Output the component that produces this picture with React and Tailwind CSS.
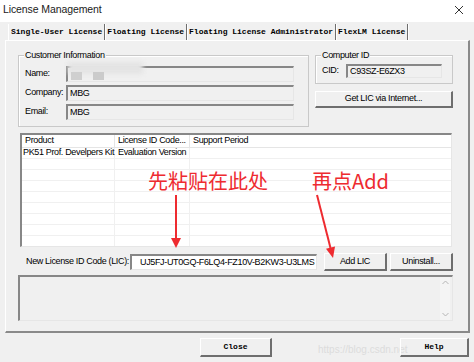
import React from "react";

const ui = "font-['Liberation_Sans',Arial,sans-serif] text-[9px] tracking-[-0.35px] text-black";
const mono = "font-['Liberation_Mono',monospace] text-[8px] tracking-normal font-bold text-black";
const sunken =
  "border-t-2 border-l-2 border-t-[#878787] border-l-[#878787] border-b border-r border-b-[#e6e6e6] border-r-[#e6e6e6]";
const raised =
  "border-t border-l border-t-white border-l-white border-b-2 border-r-2 border-b-[#6e6e6e] border-r-[#6e6e6e]";

const Field = ({ label, value, children }) => (
  <div className="flex items-center h-[16px]">
    <span className="w-[47px] pl-[6px]">{label}</span>
    <div className={`relative w-[228px] h-[16px] flex items-center pl-[2px] bg-[#f0f0f0] ${sunken}`}>
      {value}
      {children}
    </div>
  </div>
);

const Group = ({ title, className, children }) => (
  <div className={`relative border border-[#c9c9c9] shadow-[inset_1px_1px_0_#fff] ${className}`}>
    <span className="absolute -top-[7px] left-[5px] bg-[#f0f0f0] px-[1px] leading-[12px]">{title}</span>
    {children}
  </div>
);

const Tab = ({ children, active }) => (
  <div
    className={`h-[16px] flex items-center px-[2px] border-r border-r-[#6e6e6e] shadow-[1px_0_0_#fff] ${
      active ? "border-l border-l-white" : ""
    }`}
  >
    {children}
  </div>
);

export default function App() {
  const rows = Array.from({ length: 9 });
  return (
    <div className={`relative w-[474px] h-[362px] bg-[#f0f0f0] overflow-hidden ${ui}`}>
      {/* title bar */}
      <div className="h-[22px] bg-white flex items-center justify-between pl-[3px] pr-[10px]">
        <span className="text-[10.5px] tracking-[-0.1px] text-[#1a1a1a] -mt-[2px]">License Management</span>
        <svg width="10" height="10" viewBox="0 0 10 10" className="-mt-[2px]">
          <path d="M1 1L9 9M9 1L1 9" stroke="#333" strokeWidth="1" />
        </svg>
      </div>

      {/* tabs */}
      <div className={`flex pl-[8px] pt-[2px] h-[18px] ${mono}`}>
        <Tab active>Single-User License</Tab>
        <Tab>Floating License</Tab>
        <Tab>Floating License Administrator</Tab>
        <Tab>FlexLM License</Tab>
      </div>

      {/* tab panel */}
      <div className="ml-[5px] w-[465px] h-[293px] border-t border-l border-t-white border-l-white border-r-2 border-b-2 border-r-[#8a8a8a] border-b-[#8a8a8a] pl-[12px] pt-[14px]">
        <div className="flex gap-[6px]">
          <Group title="Customer Information" className="w-[291px] h-[72px] pt-[10px]">
            <div className="flex flex-col gap-[3px]">
              <Field label="Name:" value="">
                <div className="absolute left-[0px] -top-[6px] w-[75px] h-[12px] bg-[#e4e4e4] blur-[2px]" />
                <div className="absolute left-[3px] top-[4px] w-[11px] h-[8px] bg-[#cfcfcf] blur-[0.5px]" />
                <div className="absolute left-[25px] top-[4px] w-[11px] h-[8px] bg-[#cbcbcb] blur-[0.5px]" />
              </Field>
              <Field label="Company:" value="MBG" />
              <Field label="Email:" value="MBG" />
            </div>
          </Group>
          <div className="w-[138px] flex flex-col">
            <Group title="Computer ID" className="h-[29px] pt-[8px]">
              <div className="flex items-center">
                <span className="w-[30px] pl-[6px]">CID:</span>
                <div className={`w-[96px] h-[14px] flex items-center pl-[2px] ${sunken}`}>C93SZ-E6ZX3</div>
              </div>
            </Group>
            <div className={`mt-[7px] h-[17px] flex items-center justify-center ${raised}`}>Get LIC via Internet...</div>
          </div>
        </div>

        {/* list view */}
        <div className={`mt-[6px] ml-[2px] w-[432px] h-[114px] bg-white overflow-hidden ${sunken}`}>
          <div className="flex h-[13px] border-b border-b-[#e5e5e5] bg-white">
            <div className="w-[93px] pl-[3px] border-r border-r-[#e5e5e5] flex items-center">Product</div>
            <div className="w-[75px] pl-[3px] border-r border-r-[#e5e5e5] flex items-center">License ID Code...</div>
            <div className="flex-1 pl-[3px] flex items-center">Support Period</div>
          </div>
          {rows.map((_, i) => (
            <div key={i} className="flex h-[11px] border-b border-b-[#f0f0f0]">
              <div className="w-[93px] pl-[1px] border-r border-r-[#f0f0f0] flex items-center whitespace-nowrap">
                {i === 0 ? "PK51 Prof. Develpers Kit" : ""}
              </div>
              <div className="w-[75px] pl-[3px] border-r border-r-[#f0f0f0] flex items-center whitespace-nowrap">
                {i === 0 ? "Evaluation Version" : ""}
              </div>
              <div className="flex-1" />
            </div>
          ))}
        </div>

        {/* LIC row */}
        <div className="mt-[6px] flex items-center h-[18px]">
          <span className="w-[112px] pl-[8px] whitespace-nowrap">New License ID Code (LIC):</span>
          <div className={`w-[187px] h-[16px] bg-white flex items-center pl-[8px] ${sunken}`}>
            UJ5FJ-UT0GQ-F6LQ4-FZ10V-B2KW3-U3LMS
          </div>
          <div className={`ml-[7px] w-[63px] h-[18px] flex items-center justify-center ${raised}`}>Add LIC</div>
          <div className={`ml-[3px] w-[63px] h-[18px] flex items-center justify-center ${raised}`}>Uninstall...</div>
        </div>

        {/* message box */}
        <div className={`mt-[4px] w-[435px] h-[46px] flex justify-end ${sunken}`}>
          <div className="w-[10px] h-full flex flex-col items-center justify-between py-[3px] mr-[2px] bg-[#f4f4f4]">
            <svg width="7" height="5" viewBox="0 0 7 5">
              <path d="M0.5 4L3.5 1L6.5 4" stroke="#b5b5b5" fill="none" />
            </svg>
            <svg width="7" height="5" viewBox="0 0 7 5">
              <path d="M0.5 1L3.5 4L6.5 1" stroke="#b5b5b5" fill="none" />
            </svg>
          </div>
        </div>
      </div>

      {/* bottom buttons */}
      <div className={`relative flex mt-[5px] pl-[200px] ${mono}`}>
        <div className={`w-[72px] h-[19px] flex items-center justify-center ${raised}`}>Close</div>
        <span className="absolute left-[318px] top-[4px] font-['Liberation_Sans',Arial,sans-serif] font-normal text-[10px] text-[#dcdcdc]">
          https://blog.csdn.net
        </span>
        <div className={`relative ml-[128px] w-[69px] h-[19px] flex items-center justify-center ${raised}`}>Help</div>
      </div>

      {/* red annotations */}
      <span className="absolute left-[148px] top-[170px] text-[20px] leading-[22px] tracking-normal text-[#ee2b30] font-['Noto_Sans_CJK_SC',sans-serif]">
        先粘贴在此处
      </span>
      <span className="absolute left-[312px] top-[170px] text-[20px] leading-[22px] tracking-normal text-[#ee2b30] font-['Noto_Sans_CJK_SC',sans-serif]">
        再点Add
      </span>
      <svg className="absolute left-0 top-0 pointer-events-none" width="474" height="362">
        <path d="M176 195L176 240" stroke="#ee2b30" strokeWidth="2" />
        <path d="M171 238L181 238L176 248Z" fill="#ee2b30" />
        <path d="M317 195L330.5 248" stroke="#ee2b30" strokeWidth="2" />
        <path d="M335 246.5L326 248.8L333 258Z" fill="#ee2b30" />
      </svg>
    </div>
  );
}
